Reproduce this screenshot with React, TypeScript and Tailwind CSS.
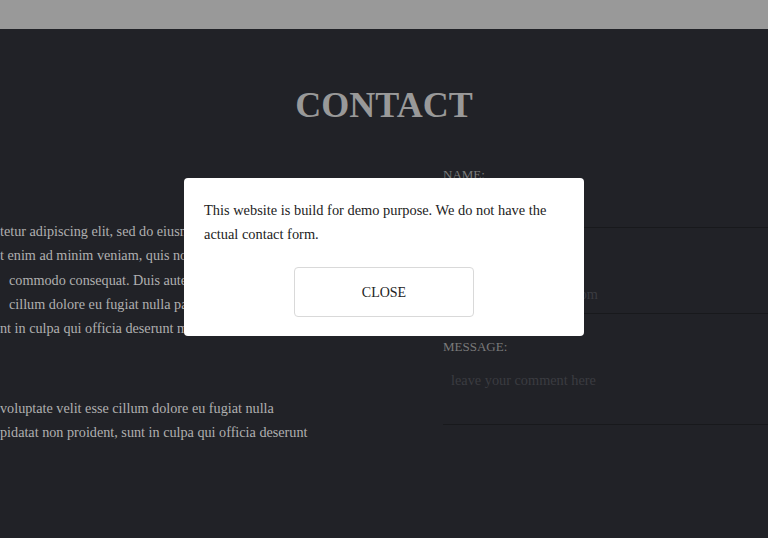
import React from "react";

const serif = { fontFamily: '"Liberation Serif", "Times New Roman", serif' };

export default function App() {
  const para1 = [
    { t: "tetur adipiscing elit, sed do eiusmod tempor incididunt ut labore", pad: "" },
    { t: "t enim ad minim veniam, quis nostrud exercitation ullamco laboris", pad: "" },
    { t: "commodo consequat. Duis aute irure dolor in reprehenderit in", pad: "pl-[9px]" },
    { t: "cillum dolore eu fugiat nulla pariatur. Excepteur sint occaecat", pad: "pl-[9px]" },
    { t: "nt in culpa qui officia deserunt mollit anim id est laborum.", pad: "" },
  ];
  const para2 = [
    "voluptate velit esse cillum dolore eu fugiat nulla",
    "pidatat non proident, sunt in culpa qui officia deserunt",
  ];

  return (
    <div className="relative min-h-[538px] w-full overflow-hidden bg-[#212227]" style={serif}>
      <div className="h-[29px] bg-[#999999]" />

      <h1 className="mt-[56px] text-center text-[36px] font-bold leading-[40px] text-[#999999]">
        CONTACT
      </h1>

      <div className="mt-[40px] flex">
        <div className="w-[443px] shrink-0 overflow-hidden pt-[54px]">
          <div className="text-[14.2px] leading-[24.3px] text-[#b0b0b0]">
            {para1.map((l, i) => (
              <div key={i} className={`whitespace-nowrap ${l.pad}`}>
                {l.t}
              </div>
            ))}
          </div>
          <div className="mt-[56px] text-[14.2px] leading-[24px] text-[#b0b0b0]">
            {para2.map((l, i) => (
              <div key={i} className="whitespace-nowrap">
                {l}
              </div>
            ))}
          </div>
        </div>

        <div className="flex-1">
          <div className="-mt-[2px]">
            <label className="block text-[13px] leading-[24px] text-[#7a7a7a]">NAME:</label>
            <div className="h-[41px] border-b border-[#18191c] pl-2 pt-[9px] text-[14.3px] leading-[24px] text-[#3b3c41]">
              Your name
            </div>
          </div>
          <div className="mt-[21px]">
            <label className="block text-[13px] leading-[24px] text-[#7a7a7a]">EMAIL:</label>
            <div className="h-[41px] border-b border-[#18191c] pl-2 pt-[9px] text-[14.3px] leading-[24px] text-[#3b3c41]">
              yourname@example.com
            </div>
          </div>
          <div className="mt-[21px]">
            <label className="block text-[13px] leading-[24px] text-[#7a7a7a]">MESSAGE:</label>
            <div className="h-[66px] border-b border-[#18191c] pl-2 pt-[9px] text-[14.3px] leading-[24px] text-[#3b3c41]">
              leave your comment here
            </div>
          </div>
        </div>
      </div>

      <div className="absolute inset-0 flex justify-center pt-[178px]">
        <div className="h-[158px] w-[400px] rounded-[4px] bg-white px-5 pt-5">
          <p className="text-[14.4px] leading-[24px] text-[#222222]">
            This website is build for demo purpose. We do not have the actual contact form.
          </p>
          <div className="mt-[21px] flex justify-center">
            <button className="h-[50px] w-[180px] rounded-[4px] border border-[#d9d9d9] bg-white text-[14px] text-[#222222]">
              CLOSE
            </button>
          </div>
        </div>
      </div>
    </div>
  );
}
